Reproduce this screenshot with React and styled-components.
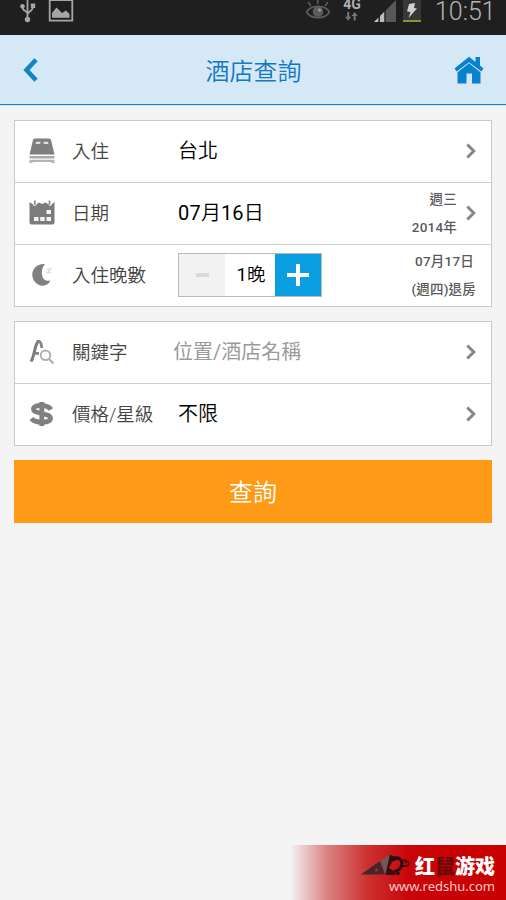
import React from "react";
import styled, { createGlobalStyle } from "styled-components";

const GlobalStyle = createGlobalStyle`
  * {
    box-sizing: border-box;
  }

  body {
    margin: 0;
    background: #f4f4f4;
    font-family: Roboto, "Noto Sans CJK TC", sans-serif;
  }
`;

const UsbIcon = () => (
  <svg width="17" height="24" viewBox="0 0 17 24" fill="none" stroke="#a6a6a6">
    <path d="M7.5 0V18M7.5 15C7.5 11 13 12 13 6M7.5 14C7.5 10 2.5 12 2.5 7" strokeWidth="1.8" />
    <circle cx="7.5" cy="19.5" r="2.7" fill="#a6a6a6" stroke="none" />
    <circle cx="2.5" cy="6.2" r="2.3" fill="#a6a6a6" stroke="none" />
    <path d="M10.8 3.5h4.4v4.4h-4.4z" fill="#a6a6a6" stroke="none" />
  </svg>
);

const PictureIcon = () => (
  <svg width="26" height="24" viewBox="0 0 26 24">
    <path d="M1.7 0.2V20.6H24.3V0.2z" fill="none" stroke="#a6a6a6" strokeWidth="1.8" />
    <path d="M4 17.8V13L8.5 7.5 14 13 18 10.5 21.5 14V17.8z" fill="#a6a6a6" />
  </svg>
);

const EyeIcon = () => (
  <svg width="26" height="22" viewBox="0 0 26 22" fill="none" stroke="#5c5c5c">
    <path d="M1.5 12C6 4.5 20 4.5 24.5 12C20 19.5 6 19.5 1.5 12z" strokeWidth="1.8" />
    <path d="M3 2L6 6M12.7 0V4M23 2L20 6" strokeWidth="1.6" />
    <circle cx="13" cy="11.5" r="5.3" fill="#5c5c5c" stroke="none" />
    <circle cx="14.5" cy="10" r="1.5" fill="#a0a0a0" stroke="none" />
  </svg>
);

const TransferIcon = () => (
  <svg width="14" height="9" viewBox="0 0 14 9" fill="#777">
    <path d="M2.2 0h2v4.8h2L3.2 8.8 0.2 4.8h2z" />
    <path d="M8.6 8.5h2V4h2L9.6 0 6.6 4h2z" />
  </svg>
);

const SignalIcon = () => (
  <svg width="24" height="24" viewBox="0 0 24 24">
    <path d="M0 22L22 0V22z" fill="#585858" />
    <path d="M0 22L4.5 17.5V22zM6 22V16L10.5 11.5V22z" fill="#bdbdbd" />
    <path d="M5.2 22V15M11 22V10" stroke="#1f1f1f" strokeWidth="1.2" />
  </svg>
);

const BatteryIcon = () => (
  <svg width="18" height="24" viewBox="0 0 18 24">
    <path d="M0 0H18V22H0z" fill="#373737" />
    <path d="M0 20H18V22H0z" fill="#85952e" />
    <path d="M6 4L12 3 11 8 14 8.5 5.5 18 7.5 12 4 11.5z" fill="#cfcfcf" />
  </svg>
);

const BackIcon = () => (
  <svg width="18" height="24" viewBox="0 0 18 24" fill="none" stroke="#1283c7" strokeWidth="4.6">
    <path d="M14 1.8L4.5 12 14 22.2" />
  </svg>
);

const HomeIcon = () => (
  <svg width="30" height="28" viewBox="0 0 30 28" fill="#0a81cd">
    <path d="M0.5 12.5L15 0.8 21.5 6V1H26V9.6L29.5 12.5 27.3 15.6 15 6.2 2.7 15.6z" />
    <path d="M3.5 16.3L15 7.3 26.5 16.3V27.5H18V17.5H12.5V27.5H3.5z" />
  </svg>
);

const BedIcon = () => (
  <svg width="26" height="26" viewBox="0 0 26 26" fill="#7f7f7f">
    <path d="M6 0.5H20Q21.5 0.5 22 2L25.5 16.5H0.5L4 2Q4.5 0.5 6 0.5z" />
    <path d="M7 3.7h4.5l-.4 2.200H6.5zM14.5 3.7h4.500l.5 2.200h-4.800z" fill="#dedede" />
    <path d="M0.5 18H25.5V20.5H0.5z" fill="#a9a9a9" />
    <path d="M0.5 21.7H25.5V25H22.5V24H3.5V25H0.5z" fill="#b4b4b4" />
  </svg>
);

const CalendarIcon = () => (
  <svg width="26" height="26" viewBox="0 0 26 26">
    <path
      d="M0.5 2L3.5 4Q5.5 8 8 4L10 2.5 13 4 16.5 2.5 19 4Q21.5 8 23 4L25.5 2V22.5Q25.5 24.5 23.5 24.5H2.5Q0.5 24.5 0.5 22.5z"
      fill="#7c7c7c"
    />
    <path d="M5.8 0.5V5M20.5 0.5V5" stroke="#909090" strokeWidth="1.8" />
    <path
      d="M17.5 10h4.5v4h-4.5zM5 17h4.5v4h-4.5zM11.2 17h4.5v4h-4.5zM17.5 17h4.5v4h-4.5z"
      fill="#f4f4f4"
    />
  </svg>
);

const MoonIcon = () => (
  <svg width="26" height="26" viewBox="0 0 26 26">
    <path
      d="M16 2C1 1 -1 20 11.5 23.5C16 24.5 20 22 21.5 18.5C12 21 10.5 8 16 2z"
      fill="#808080"
    />
    <path d="M18 7H21.5L18.3 10.8H21.8" fill="none" stroke="#d3d3d3" strokeWidth="1.1" />
  </svg>
);

const KeywordIcon = () => (
  <svg width="26" height="26" viewBox="0 0 26 26" fill="none">
    <path d="M2 22.5C6 16 5 8 9 2.5" stroke="#7d7d7d" strokeWidth="3" />
    <path d="M8 2.5H10.5Q12.5 4 12.8 9M6 14.3H10" stroke="#858585" strokeWidth="2.8" />
    <circle cx="16.5" cy="16.3" r="4.8" stroke="#b0b0b0" strokeWidth="2" />
    <path d="M20 20L24.5 24.5" stroke="#b0b0b0" strokeWidth="2.2" />
  </svg>
);

const DollarIcon = () => (
  <svg width="26" height="26" viewBox="0 0 26 26" fill="none" stroke="#808080">
    <path
      d="M22 8.5C19 3.5 4.5 3 4.5 8C4.5 13.5 21.5 11.5 21.5 17.5C21.5 22.5 6 22.5 2.5 17.5"
      strokeWidth="4.8"
    />
    <path d="M12.8 1V25" strokeWidth="4.8" />
  </svg>
);

const ChevronIcon = () => (
  <svg width="10" height="16" viewBox="0 0 10 16" fill="none" stroke="#868686" strokeWidth="3">
    <path d="M1.3 1.5L7.8 8 1.3 14.5" />
  </svg>
);

const MouseLogo = () => (
  <svg width="52" height="24" viewBox="0 0 52 24">
    <path d="M0 20.5L19 7 24 20.5z" fill="#43272b" />
    <path d="M19 7L29 0.5 24.5 20.5z" fill="#6f5858" />
    <path d="M24.5 20.5L29 0.5 38 5 31 8 28 14 33 17 35 21H27z" fill="#381014" />
    <path d="M29 5Q39 1 41 9Q41 15 35 17L38 20.5" fill="none" stroke="#300c10" strokeWidth="3" />
    <path d="M41 12Q48 13 48 9Q46 6 44 9M42 6L46 7" fill="none" stroke="#3a090c" strokeWidth="1.7" />
    <circle cx="15.5" cy="16" r="1.5" fill="#bd2229" />
  </svg>
);

const App = () => (
  <>
    <GlobalStyle />
    <Screen>
      <StatusBar>
        <StatusItem $left={20}>
          <UsbIcon />
        </StatusItem>
        <StatusItem $left={11}>
          <PictureIcon />
        </StatusItem>
        <StatusItem $left="auto">
          <EyeIcon />
        </StatusItem>
        <Network>
          <NetworkName>4G</NetworkName>
          <TransferIcon />
        </Network>
        <StatusItem $left={12}>
          <SignalIcon />
        </StatusItem>
        <StatusItem $left={5}>
          <BatteryIcon />
        </StatusItem>
        <Clock>10:51</Clock>
      </StatusBar>

      <Header>
        <HeaderButton aria-label="返回">
          <BackIcon />
        </HeaderButton>
        <Title>酒店查詢</Title>
        <HeaderButton aria-label="首頁">
          <HomeIcon />
        </HeaderButton>
      </Header>

      <Form>
        <Card>
          <Row>
            <BedIcon />
            <Label>入住</Label>
            <Value>台北</Value>
            <ChevronIcon />
          </Row>
          <Row>
            <CalendarIcon />
            <Label>日期</Label>
            <Value>
              <Digits>07</Digits>月<Digits>16</Digits>日
            </Value>
            <Note $gap={9}>
              <span>週三</span>
              <span>2014年</span>
            </Note>
            <ChevronIcon />
          </Row>
          <Row>
            <MoonIcon />
            <Label>入住晚數</Label>
            <Stepper>
              <StepButton disabled>
                <StepBar />
              </StepButton>
              <Nights>
                <Digits>1</Digits>晚
              </Nights>
              <StepButton $active>
                <svg width="22" height="22" viewBox="0 0 22 22" stroke="#fff" strokeWidth="4">
                  <path d="M0 11H22M11 0V22" />
                </svg>
              </StepButton>
            </Stepper>
            <Note $gap={0}>
              <Checkout>07月17日</Checkout>
              <span>(週四)退房</span>
            </Note>
          </Row>
        </Card>

        <Card>
          <Row>
            <KeywordIcon />
            <Label>關鍵字</Label>
            <Placeholder>位置/酒店名稱</Placeholder>
            <ChevronIcon />
          </Row>
          <Row>
            <DollarIcon />
            <Label>價格/星級</Label>
            <Value>不限</Value>
            <ChevronIcon />
          </Row>
        </Card>

        <SearchButton>查詢</SearchButton>
      </Form>

      <Watermark>
        <Brand>
          <MouseLogo />
          <BrandName>
            红<Dark>鼠</Dark>游戏
          </BrandName>
        </Brand>
        <Site>www.redshu.com</Site>
      </Watermark>
    </Screen>
  </>
);

export default App;

const Screen = styled.div`
  position: relative;
  width: 506px;
  height: 900px;
  overflow: hidden;
  background: #f4f4f4;
`;

const StatusBar = styled.div`
  display: flex;
  align-items: flex-start;
  height: 35px;
  padding-right: 11px;
  overflow: hidden;
  background: #1f1f1f;
`;

const StatusItem = styled.div`
  display: flex;
  margin-left: ${props => (props.$left === "auto" ? "auto" : `${props.$left}px`)};
`;

const Network = styled.div`
  display: flex;
  flex-direction: column;
  align-items: center;
  width: 20px;
  margin-left: 11px;
`;

const NetworkName = styled.span`
  height: 12px;
  font-size: 14px;
  font-weight: 700;
  line-height: 9px;
  color: #b0b0b0;
`;

const Clock = styled.span`
  width: 60px;
  margin-left: 14px;
  font-size: 25px;
  font-weight: 350;
  line-height: 23px;
  color: #b5b5b5;
  white-space: nowrap;
`;

const Header = styled.header`
  display: flex;
  align-items: center;
  justify-content: space-between;
  height: 70px;
  padding: 0 21px 0 22px;
  background: #d5e8f6;
  border-bottom: 1px solid #1d7fc7;
  box-shadow: 0 1px 0 #c3eafa;
`;

const HeaderButton = styled.button`
  display: flex;
  width: 31px;
  padding: 0;
  background: none;
  border: 0;
`;

const Title = styled.h1`
  margin: 0;
  font-size: 24px;
  font-weight: 350;
  color: #1279c4;
`;

const Form = styled.main`
  display: flex;
  flex-direction: column;
  gap: 14px;
  padding: 15px 14px 0;
`;

const Card = styled.section`
  background: #fff;
  border: 1px solid #c9c9c9;
`;

const Row = styled.div`
  display: flex;
  align-items: center;
  height: 61px;
  padding: 0 15px 1px 14px;

  & + & {
    height: 62px;
    border-top: 1px solid #cfcfcf;
  }
`;

const Label = styled.span`
  width: 106px;
  margin-left: 17px;
  padding-bottom: 3px;
  font-size: 18.5px;
  font-weight: 350;
  color: #444;
  white-space: nowrap;
`;

const Value = styled.span`
  flex: 1;
  padding-bottom: 3px;
  font-size: 20px;
  font-weight: 350;
  color: #000;
`;

const Digits = styled.span`
  font-weight: 400;
  letter-spacing: 0.2px;
`;

const Placeholder = styled(Value)`
  margin-left: -5px;
  font-weight: 400;
  color: #9b9b9b;
`;

const Note = styled.div`
  display: flex;
  flex-direction: column;
  align-items: flex-end;
  margin-left: auto;
  margin-right: ${props => props.$gap}px;
  font-size: 13.5px;
  font-weight: 500;
  line-height: 28px;
  letter-spacing: 0.2px;
  color: #5a5a5a;
`;

const Checkout = styled.span`
  margin-right: 2px;
`;

const Stepper = styled.div`
  display: flex;
  width: 144px;
  height: 44px;
  border: 1px solid #b9b9b9;
`;

const StepButton = styled.button`
  display: flex;
  align-items: center;
  justify-content: center;
  width: 46px;
  padding: 0;
  background: ${props => (props.$active ? "#0a9fe0" : "#f2f2f2")};
  border: 0;
`;

const StepBar = styled.span`
  width: 13px;
  height: 4px;
  background: #dadada;
`;

const Nights = styled.span`
  flex: 1;
  padding-left: 2px;
  font-size: 18.5px;
  font-weight: 350;
  line-height: 42px;
  text-align: center;
  color: #000;
`;

const SearchButton = styled.button`
  height: 63px;
  padding: 0 0 2px;
  font-family: inherit;
  font-size: 24px;
  font-weight: 350;
  color: #fff;
  background: #ff9a16;
  border: 0;
`;

/* sits over the bottom right corner of the screen */
const Watermark = styled.div`
  position: absolute;
  right: 0;
  bottom: 0;
  display: flex;
  flex-direction: column;
  align-items: flex-end;
  width: 216px;
  height: 55px;
  padding: 9px 11px 0 0;
  background: linear-gradient(to right, #f4f4f4 0, #dc8585 36px, #cc3030 78px, #c80508 120px, #c80000 100%);
`;

const Brand = styled.div`
  display: flex;
  align-items: center;
  height: 24px;
`;

const BrandName = styled.span`
  margin-left: 2px;
  font-family: "Noto Sans CJK SC", sans-serif;
  font-size: 20px;
  font-weight: 900;
  line-height: 24px;
  color: #fff;
`;

const Dark = styled.span`
  color: #6b0808;
`;

const Site = styled.span`
  font-family: "Noto Sans", sans-serif;
  font-size: 13px;
  line-height: 17px;
  color: #f7c9c9;
`;
